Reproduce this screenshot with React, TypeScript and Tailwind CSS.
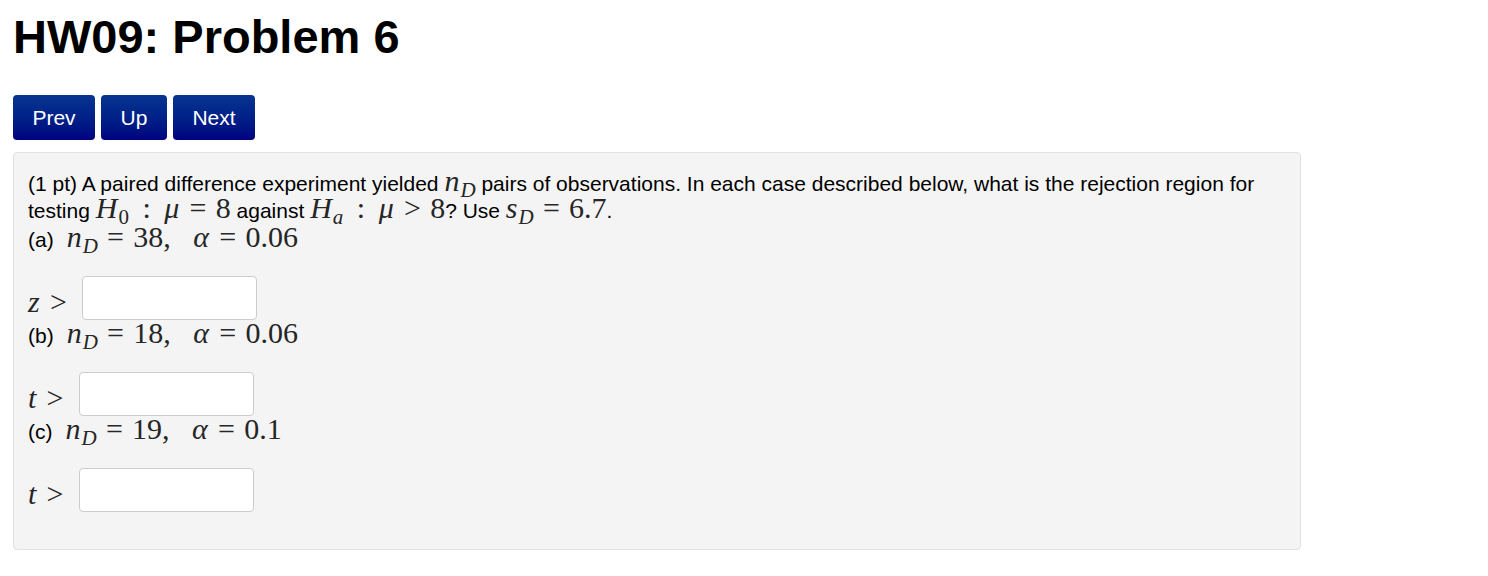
import React from 'react';

// small helpers for the typeset math
const M: React.FC<{ children: React.ReactNode; className?: string }> = ({ children, className = '' }) => (
  <span className={`font-['Liberation_Serif',serif] text-[30px] leading-[0] text-[#262626] whitespace-nowrap ${className}`}>
    {children}
  </span>
);

const V: React.FC<{ children: React.ReactNode }> = ({ children }) => <i className="pr-[1px]">{children}</i>;

const Sub: React.FC<{ children: React.ReactNode; italic?: boolean }> = ({ children, italic }) => (
  <span className={`relative top-[0.28em] text-[21px] ${italic ? 'italic' : 'not-italic'}`}>{children}</span>
);

const Op: React.FC<{ children: React.ReactNode }> = ({ children }) => (
  <span className="inline-block w-[0.78em] mx-[0.2em] text-center not-italic">{children}</span>
);

const NavButton: React.FC<{ label: string; width: string }> = ({ label, width }) => (
  <button
    className={`${width} h-[45px] rounded-[4px] bg-gradient-to-b from-[#0a3490] to-[#000080] text-white text-[21px] leading-none`}
  >
    {label}
  </button>
);

const AnswerRow: React.FC<{ v: string; gap: string }> = ({ v, gap }) => (
  <div className="mt-[21px] flex items-center h-[44px]">
    <M className="pt-[8px]">
      <V>{v}</V>
      <Op>&gt;</Op>
    </M>
    <input
      type="text"
      className={`${gap} w-[175px] h-[44px] bg-white border border-[#cccccc] rounded-[4px] outline-none`}
    />
  </div>
);

const Case: React.FC<{ tag: string; n: string; a: string }> = ({ tag, n, a }) => (
  <div className="mt-[1px] leading-[30px]">
    ({tag})
    <M className="ml-[13px]">
      <V>n</V>
      <Sub italic>D</Sub>
      <Op>=</Op>
      {n},<span className="ml-[0.75em]" />
      <V>α</V>
      <Op>=</Op>
      {a}
    </M>
  </div>
);

export default function App() {
  return (
    <div className="px-[13px] font-['Liberation_Sans',Arial,sans-serif] text-black bg-white min-h-[576px]">
      <h1 className="mt-[13px] text-[47px] leading-[47px] font-bold">HW09: Problem 6</h1>

      <div className="mt-[35px] flex gap-[6px]">
        <NavButton label="Prev" width="w-[82px]" />
        <NavButton label="Up" width="w-[66px]" />
        <NavButton label="Next" width="w-[82px]" />
      </div>

      <div className="mt-[12px] w-[1288px] bg-[#f4f4f4] border border-[#e1e1e1] rounded-[4px] pl-[14px] pr-[14px] pt-[17px] pb-[37px] text-[21px]">
        <p className="leading-[27px]">
          (1 pt) A paired difference experiment yielded{' '}
          <M>
            <V>n</V>
            <Sub italic>D</Sub>
          </M>{' '}
          pairs of observations. In each case described below, what is the rejection region for testing{' '}
          <M>
            <V>H</V>
            <Sub>0</Sub>
            <Op>:</Op>
            <V>μ</V>
            <Op>=</Op>8
          </M>{' '}
          against{' '}
          <M>
            <V>H</V>
            <Sub italic>a</Sub>
            <Op>:</Op>
            <V>μ</V>
            <Op>&gt;</Op>8
          </M>
          ? Use{' '}
          <M>
            <V>s</V>
            <Sub italic>D</Sub>
            <Op>=</Op>6.7
          </M>
          .
        </p>

        <Case tag="a" n="38" a="0.06" />
        <AnswerRow v="z" gap="ml-[6px]" />

        <Case tag="b" n="18" a="0.06" />
        <AnswerRow v="t" gap="ml-[6px]" />

        <Case tag="c" n="19" a="0.1" />
        <AnswerRow v="t" gap="ml-[6px]" />
      </div>
    </div>
  );
}
